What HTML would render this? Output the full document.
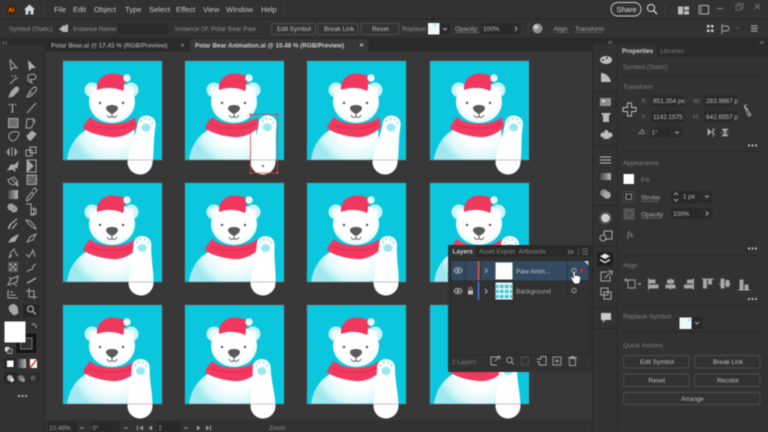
<!DOCTYPE html>
<html><head><meta charset="utf-8"><style>
html,body{margin:0;padding:0;width:768px;height:432px;overflow:hidden;background:#383838}
svg{display:block;filter:blur(.5px)}
text{font-family:"Liberation Sans",sans-serif;font-size:6.6px;fill:#a8a8a8}
.m{font-size:7.6px;fill:#c4c4c4}
.c{font-size:6.4px;fill:#8f8f8f}
.t{font-size:6.3px;font-weight:bold;fill:#9a9a9a}
.l{fill:#7f7f7f;font-size:6.6px}
.w{fill:#bdbdbd;font-size:6.4px}
.ic{fill:none;stroke:#a8a8a8;stroke-width:1}
.if{fill:#a8a8a8}
</style></head><body>
<svg width="768" height="432" viewBox="0 0 768 432" xmlns="http://www.w3.org/2000/svg">
<defs>
<radialGradient id="bd" gradientUnits="userSpaceOnUse" cx="50" cy="62" r="44"><stop offset=".5" stop-color="#fff"/><stop offset=".82" stop-color="#d8f7fa"/><stop offset="1" stop-color="#9fe8ef"/></radialGradient>
<radialGradient id="hd" gradientUnits="userSpaceOnUse" cx="49" cy="36" r="30"><stop offset=".68" stop-color="#fff"/><stop offset="1" stop-color="#c8f4f7"/></radialGradient>
<pattern id="pt" width="5" height="5" patternUnits="userSpaceOnUse"><rect width="5" height="5" fill="#d8f2f6"/><rect width="3.5" height="3" fill="#32c4d8"/></pattern>
<g id="bear">
<rect width="99" height="99" fill="#0ac7dd"/>
<path d="M4 99C6 84 14 73 27 67L71 67L73 99Z" fill="url(#bd)"/>
<circle cx="29" cy="29" r="7.5" fill="#c5f3f6"/><circle cx="29.5" cy="29.5" r="4.5" fill="#eafbfc"/>
<circle cx="68" cy="29" r="7.5" fill="#c5f3f6"/><circle cx="67.5" cy="29.5" r="4.5" fill="#eafbfc"/>
<ellipse cx="49" cy="41" rx="23" ry="21" fill="url(#hd)"/>
<path d="M34 29C33 18 42 12 50 12.500C56 13 61 14 64 17L61 23C61 26 61 28 60 30C52 26 42 26 34 29Z" fill="#f0385f"/>
<circle cx="64" cy="17" r="3.700" fill="#e6fafb"/>
<circle cx="37" cy="42" r="1.200" fill="#555"/><circle cx="60" cy="42" r="1.200" fill="#555"/>
<path d="M43 47C43 43 55 43 55 47C55 50 51 52 49 53C47 52 43 50 43 47Z" fill="#5a5a5c"/>
<path d="M49 52V55M44 54C45 57 48 57 49 55C50 57 53 57 54 54" fill="none" stroke="#555" stroke-width=".9"/>
<path d="M27 56C36 65 62 65 72 56L74 66C66 74 56 77 48 76C38 75 26 72 20 67C21 63 24 60 27 56Z" fill="#f23a60"/>
<path d="M26 63C38 69 60 69 71 62" fill="none" stroke="#e12f55" stroke-width="1.500"/>
</g>
<g id="paw">
<path d="M-12.500 0C-12.500-12-9-24-9-38C-9-50 9-50 9-38C9-24 12.500-12 12.500 0A12.500 12.500 0 0 1-12.500 0Z" fill="#fff"/>
<ellipse cx="0" cy="-35" rx="4.600" ry="4" fill="#9ae9f1"/>
<circle cx="-5.500" cy="-40.500" r="1.200" fill="#9ae9f1"/><circle cx="-2.100" cy="-43.500" r="1.200" fill="#9ae9f1"/><circle cx="2.100" cy="-43.500" r="1.200" fill="#9ae9f1"/><circle cx="5.500" cy="-40.500" r="1.200" fill="#9ae9f1"/>
</g>
<linearGradient id="gg"><stop offset="0" stop-color="#444"/><stop offset="1" stop-color="#bbb"/></linearGradient>
</defs>

<rect width="768" height="432" fill="#383838"/>

<!-- artboards -->
<use href="#bear" x="63" y="61"/><use href="#bear" x="185" y="61"/><use href="#bear" x="307" y="61"/><use href="#bear" x="430" y="61"/>
<use href="#bear" x="63" y="183"/><use href="#bear" x="185" y="183"/><use href="#bear" x="307" y="183"/><use href="#bear" x="430" y="183"/>
<use href="#bear" x="63" y="305"/><use href="#bear" x="185" y="305"/><use href="#bear" x="307" y="305"/><use href="#bear" x="430" y="305"/>
<use href="#paw" transform="translate(140 162) rotate(10)"/>
<use href="#paw" transform="translate(263 162) rotate(7)"/>
<use href="#paw" transform="translate(385 162) rotate(10)"/>
<use href="#paw" transform="translate(508 162) rotate(9)"/>
<use href="#paw" transform="translate(141 283) rotate(2)"/>
<use href="#paw" transform="translate(263 283) rotate(4)"/>
<use href="#paw" transform="translate(386 283) rotate(3)"/>
<use href="#paw" transform="translate(508 283) rotate(3)"/>
<use href="#paw" transform="translate(140 406) rotate(1)"/>
<use href="#paw" transform="translate(263 406) rotate(-2)"/>
<use href="#paw" transform="translate(386 406) rotate(0)"/>
<use href="#paw" transform="translate(508 406) rotate(0)"/>
<g fill="none" stroke="#777" stroke-opacity=".55" stroke-width=".8">
<rect x="63" y="61" width="99" height="99"/><rect x="185" y="61" width="99" height="99"/><rect x="307" y="61" width="99" height="99"/><rect x="430" y="61" width="99" height="99"/>
<rect x="63" y="183" width="99" height="99"/><rect x="185" y="183" width="99" height="99"/><rect x="307" y="183" width="99" height="99"/><rect x="430" y="183" width="99" height="99"/>
<rect x="63" y="305" width="99" height="99"/><rect x="185" y="305" width="99" height="99"/><rect x="307" y="305" width="99" height="99"/><rect x="430" y="305" width="99" height="99"/>
</g>
<!-- selection -->
<rect x="250.500" y="114.500" width="27" height="58.500" fill="none" stroke="#d8464e" stroke-width=".8"/>
<g fill="#d8464e"><rect x="249.500" y="113.500" width="2" height="2"/><rect x="276.500" y="113.500" width="2" height="2"/><rect x="249.500" y="172" width="2" height="2"/><rect x="276.500" y="172" width="2" height="2"/></g>
<circle cx="263" cy="166" r="1.200" fill="#777"/>

<!-- top menu -->
<rect width="768" height="39" fill="#323232"/>
<rect y="18.500" width="768" height=".8" fill="#262626"/>
<rect y="38" width="768" height="1" fill="#262626"/>
<rect x="7" y="5" width="9" height="9" rx="1" fill="#4e1d02"/>
<text x="8.300" y="12" style="font-size:6px;font-weight:bold;fill:#ff9a00">Ai</text>
<path d="M24 9.500L29.500 4.500L35 9.500H33.500V14.500H30.500V11H28.500V14.500H25.500V9.500Z" fill="#d6d6d6"/>
<rect x="44" y="4" width=".8" height="11" fill="#444"/>
<text class="m" x="54" y="12">File</text><text class="m" x="73" y="12">Edit</text><text class="m" x="94" y="12">Object</text><text class="m" x="125" y="12">Type</text><text class="m" x="149" y="12">Select</text><text class="m" x="176" y="12">Effect</text><text class="m" x="203" y="12">View</text><text class="m" x="226" y="12">Window</text><text class="m" x="261" y="12">Help</text>
<rect x="283" y="4" width=".8" height="11" fill="#444"/>
<rect x="611" y="2.500" width="30" height="13.500" rx="6.700" fill="none" stroke="#cfcfcf" stroke-width=".9"/>
<text class="m" x="616.500" y="12" style="fill:#dcdcdc">Share</text>
<circle cx="651" cy="8" r="3.600" fill="none" stroke="#d0d0d0" stroke-width="1.100"/><path d="M653.500 10.500L657 14" stroke="#d0d0d0" stroke-width="1.300"/>
<rect x="665" y="4" width=".8" height="11" fill="#444"/>
<path d="M678 6.500h5v8h-5zM684 6.500h5v3.500h-5zM684 11h5v3.500h-5z" fill="#bdbdbd"/>
<rect x="699" y="5.500" width="9.500" height="8.500" fill="none" stroke="#b5b5b5"/><rect x="699" y="5.500" width="3" height="8.500" fill="#666"/>
<rect x="717" y="8" width="6" height="1" fill="#8a8a8a"/>
<rect x="738" y="3.500" width="5" height="4.500" fill="none" stroke="#7a7a7a" stroke-width=".8"/><rect x="736" y="5.500" width="5" height="4.500" fill="#323232" stroke="#7a7a7a" stroke-width=".8"/>
<path d="M755 4l5 5M760 4l-5 5" stroke="#7a7a7a" stroke-width=".9"/>

<!-- control bar -->
<text class="c" x="9" y="31">Symbol (Static)</text>
<path d="M59 29l5-4 1 1 2-2 1 1v7h-5z" fill="#b9b9b9"/>
<text class="c" x="73" y="31">Instance Name:</text>
<rect x="118" y="23" width="50" height="11" fill="#2a2a2a"/>
<text class="c" x="175" y="31">Instance Of: Polar Bear Paw</text>
<g fill="none" stroke="#505050" stroke-width=".9"><rect x="271.500" y="23.500" width="44" height="11" rx="1.500"/><rect x="318" y="23.500" width="40" height="11" rx="1.500"/><rect x="361" y="23.500" width="38" height="11" rx="1.500"/></g>
<text class="w" x="277" y="31">Edit Symbol</text><text class="w" x="324" y="31">Break Link</text><text class="w" x="372" y="31">Reset</text>
<text class="c" x="402" y="31">Replace:</text>
<rect x="428" y="23" width="11.500" height="11.500" fill="#f2f7f8"/><rect x="434" y="24" width="2" height="2" fill="#7fe0ea"/>
<rect x="440" y="23" width="10" height="11.500" fill="#292929"/><path d="M443 28l2 2 2-2" class="ic" stroke-width=".8"/>
<text class="c" x="455" y="31" style="fill:#aaa">Opacity:</text><rect x="455" y="32.300" width="24" height=".5" fill="#888"/>
<rect x="481" y="23" width="30" height="11.500" fill="#292929"/><rect x="511" y="23" width="10" height="11.500" fill="#2b2b2b"/>
<text class="w" x="483" y="31">100%</text><path d="M515 26.500l2 2.300-2 2.300" class="ic" stroke-width=".8"/>
<rect x="528" y="23" width=".8" height="11" fill="#444"/>
<circle cx="537.500" cy="28.500" r="5" fill="#8d8d8d"/><circle cx="536" cy="27" r="2.500" fill="#c9c9c9"/>
<text class="c" x="553.500" y="31" style="fill:#a5a5a5">Align</text><rect x="553.500" y="32.300" width="15" height=".5" fill="#777"/>
<text class="c" x="575" y="31" style="fill:#a5a5a5">Transform</text><rect x="575" y="32.300" width="27" height=".5" fill="#777"/>
<path d="M707 25h2.500v2.500H707zM711 25h2.500v2.500H711zM707 29.500h2.500V32H707zM711 29.500h2.500V32H711z" fill="#cfcfcf"/>
<path d="M722 24v10M723 26h3.500a2 2 0 0 1 0 5H723" class="ic"/>
<path d="M736 27.500l1.500 1.500 1.500-1.500" stroke="#666" fill="none" stroke-width=".7"/>
<path d="M751 26h6.500M751 28.500h6.500M751 31h6.500" stroke="#a0a0a0" stroke-width="1.200"/>

<!-- tabs row -->
<rect x="44" y="39" width="549" height="12.500" fill="#2a2a2a"/>
<rect x="190" y="39" width="178" height="12.500" fill="#383838"/>
<text class="t" x="51" y="47.500">Polar Bear.ai @ 17.43 % (RGB/Preview)</text>
<path d="M181 43.500l3 3M184 43.500l-3 3" stroke="#8a8a8a" stroke-width=".8"/>
<text class="t" x="195" y="47.500" style="fill:#cfcfcf">Polar Bear Animation.ai @ 10.48 % (RGB/Preview)</text>
<path d="M360 43.500l3 3M363 43.500l-3 3" stroke="#cfcfcf" stroke-width=".8"/>

<!-- left toolbar -->
<rect y="39" width="44" height="393" fill="#323232"/>
<rect x="44" y="39" width="1" height="393" fill="#2a2a2a"/>
<rect y="39" width="44" height="6" fill="#2c2c2c"/>
<path d="M4 41.500l-1.500 1.500 1.500 1.500M7 41.500l-1.500 1.500 1.500 1.500" fill="none" stroke="#888" stroke-width=".6"/>
<g class="ic">
<path d="M10 60l7 8-4-.5-2 2.500z" fill="none"/>
<path d="M28 60l8 8-4 0-3 3z" fill="#b0b0b0" stroke="none"/>
<path d="M10 84l6-6M15 75l.5 2M18 78l-2 .5M12 75l.5 1.500"/>
<path d="M28 76c3-3 8-2 8 1s-5 3-6 2l2 4-4-2z"/>
<path d="M9 97l2-5 5-5c3 0 3 2 2 4l-5 5z" fill="#a8a8a8"/>
<path d="M27 97l2-5 5-5c3 0 3 2 2 4l-5 5z"/><path d="M29 95l3-3"/>
<text x="8.500" y="112.500" style="font-family:'Liberation Serif',serif;font-size:13px;fill:#b4b4b4;stroke:none">T</text>
<path d="M27 113l9-10"/>
<rect x="8.500" y="118.500" width="9.500" height="9" fill="#6f6f6f"/>
<path d="M27 119h7l-1 2 2 0-4 7h-5z"/>
<path d="M18 132c-3-1-8 0-9 3s2 6 4 6 6-4 6-9"/>
<path d="M27 136l5-5 4 3-5 6h-2z" fill="#a8a8a8"/>
<path d="M12 147v9M9 149l-2 3 2 3zM15 149l2 3-2 3z" fill="#888"/>
<rect x="26" y="150" width="6" height="6"/><rect x="30" y="147" width="6" height="6"/>
<path d="M8 170l3-5 4 0 3-3-1 6-3-1 1 4-3-2z" fill="#a8a8a8"/>
<path d="M27 160h9v12h-9z"/><path d="M27 160l6 6-6 6z" fill="#a8a8a8"/>
<path d="M8 180l6-3 4 5-4 3-4-1zM12 179l3 4"/><path d="M16 182l2 3-1 1z" fill="#ddd"/>
<rect x="27" y="175" width="9.500" height="9.500" fill="#5e5e5e"/>
<path d="M29 177h1M32 177h1M35 179h1M28 181h1M31 180h1M34 183h1" stroke-width="1.100"/>
</g>
<rect x="8" y="190" width="10" height="9" fill="url(#gg)"/>
<g class="ic">
<path d="M27 198l5-6 2 2-5 6-2.500 1z M32 190l3-2 2 2-2 3"/>
<circle cx="11" cy="207" r="3" fill="#999"/><circle cx="14" cy="209" r="3" fill="#999"/>
<path d="M26 204h5v11h3v-8"/><rect x="31" y="209" width="5" height="5"/>
<path d="M8 228l4-5 5-4M12 229l5-6M10 224l-1 5" stroke-width="1.300"/>
<path d="M26 220l4 1 4 4 2 4-4-2-4-4z"/>
<path d="M9 242l3-4 6-3-3 6z" fill="#a8a8a8"/><path d="M27 242l3-5 6-3-3 6z"/>
<path d="M12 255l-3 3 2-6 3-3 2 5 2 2M26 254l3 3 4-7 2 7"/>
</g>
<rect x="8" y="262" width="10" height="10" fill="#5c5c5c"/>
<g fill="#c8c8c8"><circle cx="10.500" cy="264.500" r=".9"/><circle cx="15.500" cy="264.500" r=".9"/><circle cx="13" cy="267" r=".9"/><circle cx="10.500" cy="269.500" r=".9"/><circle cx="15.500" cy="269.500" r=".9"/></g>
<g class="ic">
<path d="M27 272c3-4 6-1 6-4s-2 0 3-4"/>
<path d="M8 285l3-6 7-3-1 6zM9 277l2 3M14 284l3 2"/>
<path d="M27 283l4-2 5-3" stroke-width="1.500"/>
<path d="M8 290v8h10M10 292h3M10 295h6"/>
<path d="M29 288v9h8M26 291h8v8"/>
<path d="M10 306c2-2 5-2 7 1l1 6-4 2-4-4-1-3z" fill="#a8a8a8"/>
</g>
<rect x="23" y="304" width="16" height="13" rx="1" fill="#272727"/>
<circle cx="30.500" cy="309" r="3" fill="none" stroke="#c4c4c4"/><path d="M33 311.500l3 3" stroke="#c4c4c4" stroke-width="1.100"/>
<!-- fill/stroke -->
<rect x="15.500" y="333" width="21.500" height="20.500" fill="#161616" stroke="#444" stroke-width=".7"/>
<rect x="20.500" y="338" width="11.500" height="11" fill="#323232" stroke="#999" stroke-width=".7"/>
<rect x="4.500" y="321.500" width="21" height="21" fill="#fff"/>
<path d="M32 325c2-2 4-1 4 3" class="ic"/>
<rect x="5" y="347" width="4.500" height="4.500" fill="#ddd"/><rect x="7.500" y="349" width="4.500" height="4.500" fill="#444" stroke="#ccc" stroke-width=".6"/>
<rect x="4" y="358" width="12" height="11" rx="1" fill="#272727"/><rect x="7" y="360.500" width="6.500" height="6.500" fill="#fff"/>
<rect x="18" y="359" width="8" height="9" fill="url(#gg)"/>
<rect x="30" y="359" width="7" height="9" fill="#fff"/><path d="M30 368l7-9" stroke="#e01414" stroke-width="1.300"/>
<rect x="4" y="372" width="36" height="11.500" rx="1" fill="#2e2e2e"/><rect x="4" y="372" width="12" height="11.500" rx="1" fill="#262626"/>
<circle cx="10" cy="378" r="3" fill="#aaa"/><circle cx="12" cy="380" r="2" fill="#ddd"/>
<circle cx="21" cy="378" r="3" fill="#777"/><circle cx="23" cy="380" r="2" fill="#999"/>
<circle cx="33" cy="378" r="2.600" fill="#555"/>
<g fill="#aaa"><rect x="18" y="395" width="2" height="2"/><rect x="21.500" y="395" width="2" height="2"/><rect x="25" y="395" width="2" height="2"/></g>

<!-- status bar -->
<rect x="45" y="420" width="548" height="12" fill="#323232"/>
<rect x="48" y="421" width="29" height="11" fill="#292929"/><rect x="91" y="421" width="29" height="11" fill="#292929"/><rect x="157" y="421" width="24" height="11" fill="#292929"/>
<text class="c" x="49" y="430" style="fill:#a0a0a0">10.48%</text><text class="c" x="92.500" y="430" style="fill:#a0a0a0">0°</text><text class="c" x="158.500" y="430" style="fill:#a0a0a0">2</text>
<text class="c" x="269" y="430">Zoom</text>
<g fill="none" stroke="#9a9a9a" stroke-width=".8"><path d="M80 427l2 2 2-2M124 427l2 2 2-2M184 427l2 2 2-2"/></g>
<g fill="#a0a0a0"><path d="M137 425.500h1v5h-1zM143 425.500v5l-3.500-2.500zM152 425.500v5l-3.500-2.500zM197 425.500v5l3.500-2.500zM206 425.500v5l3.500-2.500zM210 425.500h1v5h-1z"/></g>

<!-- right icon strip -->
<rect x="593" y="39" width="175" height="393" fill="#323232"/>
<rect x="592" y="39" width="1" height="393" fill="#262626"/>
<rect x="593" y="39" width="175" height="5" fill="#2a2a2a"/>
<rect x="617" y="44" width="1" height="388" fill="#292929"/>
<path d="M612 41l-1.500 1.500 1.500 1.500M610 41l-1.500 1.500 1.500 1.500M760 41l1.500 1.500-1.500 1.500M762 41l1.500 1.500-1.500 1.500" fill="none" stroke="#888" stroke-width=".6"/>
<g fill="#242424"><rect x="593" y="92" width="24" height=".8"/><rect x="593" y="145" width="24" height=".8"/><rect x="593" y="205" width="24" height=".8"/><rect x="593" y="246" width="24" height=".8"/><rect x="593" y="307" width="24" height=".8"/><rect x="593" y="328" width="24" height=".8"/></g>
<ellipse cx="606" cy="60" rx="6" ry="4" fill="#bdbdbd"/><circle cx="603" cy="60" r="1" fill="#333"/><circle cx="607" cy="58" r="1" fill="#333"/>
<path d="M601 82V73c5 0 9 4 10 9z" fill="#bbb"/>
<rect x="600" y="98" width="11" height="8" fill="#8f8f8f"/><rect x="602" y="100" width="3" height="2" fill="#ddd"/>
<path d="M601 113h10l-2 3v6h-6v-6z" fill="#b9b9b9"/>
<path d="M606 130a2.500 2.500 0 0 1 2.500 3 2.500 2.500 0 1 1 0 4l1 2h-6l1-2a2.500 2.500 0 1 1 0-4 2.500 2.500 0 0 1 1.500-3z" fill="#bdbdbd"/>
<path d="M600 157h11M600 160h11M600 163h11" stroke="#c0c0c0" stroke-width="1.100"/>
<rect x="600" y="173" width="11" height="7" fill="url(#gg)"/>
<circle cx="604" cy="193" r="3.800" fill="#888"/><circle cx="607" cy="195" r="3.800" fill="#aaa"/>
<circle cx="605.500" cy="218" r="4.500" fill="#d0d0d0"/><circle cx="605.500" cy="218" r="5.800" fill="none" stroke="#888" stroke-dasharray="1 1"/>
<rect x="604" y="231" width="8" height="8" fill="none" stroke="#aaa"/><circle cx="603" cy="238" r="3" fill="#323232" stroke="#aaa"/>
<rect x="597" y="252" width="16" height="14" fill="#202020"/>
<path d="M605 253.500l5 2.700-5 2.800-5-2.800z" fill="#e6e6e6"/><path d="M600 259l5 2.800 5-2.800v1.500l-5 2.800-5-2.800z" fill="#e6e6e6"/>
<path d="M607 272h-6v9h9v-5M605 278l6-6M608 271h4v4" class="ic" stroke="#c4c4c4"/>
<rect x="601" y="288" width="7" height="7" class="ic"/><rect x="604" y="292" width="7" height="7" class="ic"/>
<path d="M601 313h10v7h-6l-2 3v-3h-2z" fill="#c9c9c9"/>

<!-- properties -->
<rect x="618" y="44" width="150" height="13" fill="#2a2a2a"/>
<rect x="618" y="44" width="38" height="13" fill="#323232"/>
<text class="t" x="622" y="53" style="fill:#d2d2d2">Properties</text><text class="t" x="660" y="53" style="fill:#7e7e7e;font-weight:normal">Libraries</text>
<g fill="#292929"><rect x="622" y="76" width="138" height=".8"/><rect x="622" y="151" width="138" height=".8"/><rect x="622" y="255" width="138" height=".8"/><rect x="622" y="305" width="138" height=".8"/><rect x="622" y="331" width="138" height=".8"/></g>
<text class="l" x="623" y="69">Symbol (Static)</text>
<text class="l" x="623" y="89">Transform</text>
<path d="M627.500 103h4v4.500h4.500v4h-4.500v4.500h-4v-4.500h-4.500v-4h4.500z" fill="none" stroke="#c4c4c4" stroke-width=".9"/>
<text class="l" x="641" y="103">X:</text><text class="l" x="693" y="103">W:</text><text class="l" x="641" y="119">Y:</text><text class="l" x="693" y="119">H:</text>
<g fill="#2a2a2a"><rect x="651" y="95" width="33" height="11.500"/><rect x="704" y="95" width="33" height="11.500"/><rect x="651" y="111" width="33" height="11.500"/><rect x="704" y="111" width="33" height="11.500"/><rect x="650" y="127" width="21" height="10.500"/><rect x="672" y="127" width="10" height="10.500"/></g>
<text x="653" y="103" class="w">851.354 px</text><text x="706" y="103" class="w">283.9867 p</text><text x="653" y="119" class="w">1142.1575</text><text x="706" y="119" class="w">642.6557 p</text><text x="651.500" y="134.500" class="w">1°</text>
<path d="M639 133.500l3.500-4 2 4z" fill="none" stroke="#999" stroke-width=".8"/><text class="l" x="646" y="134">:</text>
<path d="M675 131.500l2 2 2-2" class="ic" stroke-width=".8"/>
<path d="M747 105c-2 0-3 1-2 3l3 7c1 2 3 1 2 0l-3-7M744 105l7 10" fill="none" stroke="#aaa" stroke-width=".9"/>
<path d="M708 129l3 3-3 3zM715 129l-3 3 3 3M713 128v9" fill="none" stroke="#aaa" stroke-width=".8"/><path d="M708 129l3 3-3 3z" fill="#aaa"/>
<path d="M722 129h6l-3 3zM722 136h6l-3-3zM721 132.500h8" fill="#aaa" stroke="#aaa" stroke-width=".6"/>
<g fill="#b5b5b5"><rect x="748" y="144.500" width="2" height="2"/><rect x="751.500" y="144.500" width="2" height="2"/><rect x="755" y="144.500" width="2" height="2"/><rect x="748" y="247.500" width="2" height="2"/><rect x="751.500" y="247.500" width="2" height="2"/><rect x="755" y="247.500" width="2" height="2"/><rect x="748" y="298" width="2" height="2"/><rect x="751.500" y="298" width="2" height="2"/><rect x="755" y="298" width="2" height="2"/></g>
<text class="l" x="623" y="165">Appearance</text>
<rect x="623.500" y="174" width="10.500" height="10" fill="#fff"/>
<text class="l" x="641" y="182">Fill</text>
<rect x="623.500" y="191.500" width="10.500" height="10.500" fill="#282828" stroke="#555" stroke-width=".7"/><rect x="626" y="194" width="5.500" height="5.500" fill="none" stroke="#aaa" stroke-width=".8"/>
<text class="l" x="641" y="199.500" style="fill:#aaa">Stroke</text><rect x="641" y="201" width="18" height=".5" fill="#888"/>
<rect x="671" y="191" width="31" height="12" fill="#292929"/><rect x="702.500" y="191" width="10" height="12" fill="#2b2b2b"/>
<path d="M674 195l2-2 2 2M674 199l2 2 2-2" class="ic" stroke-width=".8"/><text class="w" x="683" y="198.500">1 px</text><path d="M705 195.500l2 2 2-2" class="ic" stroke-width=".8"/>
<rect x="624" y="209" width="10" height="10" fill="#4a4a4a" stroke="#666" stroke-width=".7"/><circle cx="629" cy="214" r="3.500" fill="none" stroke="#888" stroke-dasharray="1 1" stroke-width=".8"/>
<text class="l" x="641" y="216.500" style="fill:#aaa">Opacity</text><rect x="641" y="218" width="20" height=".5" fill="#888"/>
<rect x="671" y="208" width="30" height="11" fill="#292929"/><rect x="702" y="208" width="10" height="11" fill="#2b2b2b"/>
<text class="w" x="673" y="216">100%</text><path d="M706 211.500l2 2-2 2" class="ic" stroke-width=".8"/>
<text x="627" y="237" style="font-family:'Liberation Serif',serif;font-style:italic;font-size:8px;fill:#a8a8a8">fx.</text>
<text class="l" x="623" y="267.500">Align</text>
<g fill="none" stroke="#a8a8a8" stroke-width=".9">
<path d="M628 280h7v8h-7zM626 278v4M624 280h4"/><path d="M638 283l1.500 1.500 1.500-1.500"/>
<path d="M648.500 278v12"/><rect x="649" y="280" width="6" height="3" fill="#a8a8a8"/><rect x="649" y="285" width="9" height="3" fill="#a8a8a8"/>
<path d="M670.500 278v12"/><rect x="667.500" y="280" width="6" height="3" fill="#a8a8a8"/><rect x="666" y="285" width="9" height="3" fill="#a8a8a8"/>
<path d="M693.500 278v12"/><rect x="687.500" y="280" width="6" height="3" fill="#a8a8a8"/><rect x="684.500" y="285" width="9" height="3" fill="#a8a8a8"/>
<path d="M702 279h12"/><rect x="703.500" y="279" width="3" height="9" fill="#a8a8a8"/><rect x="708.500" y="279" width="3" height="5" fill="#a8a8a8"/>
<path d="M719 284h12"/><rect x="721" y="279" width="3" height="9" fill="#a8a8a8"/><rect x="726" y="280.500" width="3" height="6" fill="#a8a8a8"/>
<path d="M738 290h12"/><rect x="740" y="280" width="3" height="10" fill="#a8a8a8"/><rect x="745" y="285" width="3" height="5" fill="#a8a8a8"/>
</g>
<text class="l" x="623" y="318.500">Replace Symbol:</text>
<rect x="679.500" y="317.500" width="12" height="11.500" fill="#f2f7f8"/><rect x="688" y="319" width="2" height="2" fill="#7fe0ea"/>
<rect x="692" y="317" width="10.500" height="12" fill="#292929"/><path d="M695 322l2 2 2-2" class="ic" stroke-width=".8"/>
<text class="l" x="623" y="347.500">Quick Actions</text>
<g fill="none" stroke="#4e4e4e" stroke-width=".9"><rect x="623.500" y="355.500" width="65.500" height="12.500" rx="1.500"/><rect x="694.500" y="355.500" width="65.500" height="12.500" rx="1.500"/><rect x="623.500" y="374" width="65.500" height="12.500" rx="1.500"/><rect x="694.500" y="374" width="65.500" height="12.500" rx="1.500"/><rect x="623.500" y="392.500" width="136.500" height="12" rx="1.500"/></g>
<text class="w" x="640" y="364">Edit Symbol</text><text class="w" x="713" y="364">Break Link</text><text class="w" x="648.500" y="382.500">Reset</text><text class="w" x="717" y="382.500">Recolor</text><text class="w" x="681" y="401">Arrange</text>

<!-- layers panel -->
<rect x="448" y="245" width="144" height="127" fill="#323232"/>
<rect x="448" y="245" width="144" height="12" fill="#2a2a2a"/>
<rect x="448" y="245" width="28" height="12" fill="#323232"/>
<text class="t" x="452.500" y="253.500" style="fill:#d0d0d0">Layers</text>
<text class="t" x="479" y="253.500" style="font-weight:normal;fill:#8b8b8b">Asset Export</text><text class="t" x="518.500" y="253.500" style="font-weight:normal;fill:#8b8b8b">Artboards</text>
<path d="M568 250l2 2-2 2M571 250l2 2-2 2" fill="none" stroke="#aaa" stroke-width=".7"/><rect x="578" y="248" width=".7" height="7" fill="#666"/>
<path d="M582 249h6M582 251.500h6M582 254h6" stroke="#888" stroke-width=".8"/>
<rect x="451" y="260" width="138" height="95" fill="#323232" stroke="#2a2a2a"/>
<rect x="451.500" y="261" width="137" height="19.500" fill="#344a60"/>
<rect x="451.500" y="280.500" width="137" height=".7" fill="#2a2a2a"/><rect x="451.500" y="300.500" width="137" height=".7" fill="#2a2a2a"/>
<rect x="465" y="261" width=".7" height="40" fill="#2a2a2a"/><rect x="480.500" y="261" width=".7" height="40" fill="#2a2a2a"/><rect x="567" y="261" width=".7" height="40" fill="#2a2a2a"/>
<rect x="477.500" y="261" width="2" height="19" fill="#cc4b4b"/><rect x="477.500" y="281.500" width="2" height="18.500" fill="#3f68c8"/>
<g fill="none" stroke="#bdbdbd" stroke-width=".9"><path d="M454 270.500c2-3.500 6-3.500 8 0-2 3.500-6 3.500-8 0zM454 291c2-3.500 6-3.500 8 0-2 3.500-6 3.500-8 0z"/><path d="M485 268.500l2.200 2.200-2.200 2.200M485 289l2.200 2.200-2.200 2.200"/></g>
<circle cx="458" cy="270.500" r="1.300" fill="#bdbdbd"/><circle cx="458" cy="291" r="1.300" fill="#bdbdbd"/>
<rect x="468" y="290.500" width="5" height="4" fill="#bdbdbd"/><path d="M469 290.500v-1.500a1.500 1.500 0 0 1 3 0v1.500" fill="none" stroke="#bdbdbd" stroke-width=".7"/>
<rect x="495.500" y="262.500" width="17" height="17" fill="#fff"/>
<rect x="495.500" y="282.500" width="17" height="17" fill="#fff"/><rect x="496" y="283" width="16" height="16" fill="url(#pt)"/>
<text x="516" y="273.500" style="font-size:6.500px;fill:#bfc7cf">Paw Anim...</text>
<text x="516" y="293.500" style="font-size:6.500px;fill:#aaa">Background</text>
<circle cx="574" cy="270.500" r="2.200" fill="none" stroke="#c4c4c4" stroke-width=".8"/><circle cx="574" cy="290.500" r="2.200" fill="none" stroke="#aaa" stroke-width=".8"/>
<circle cx="581.500" cy="270.500" r="1.600" fill="#e01e2a"/><path d="M584 261h4.500v4.500z" fill="#ccc"/>
<path d="M573 272.500c0-1.500 2-1.500 2 0v3.500l1-.5c1 0 1.500 0 2 .5l1.500.3c1 .3 1 1 1 2l-.5 3c-.3 1.700-1 2.500-2.500 2.500h-2c-1 0-2-1-2.500-2l-2-3.500c-.5-1 .7-1.700 1.500-.8l1 1z" fill="#fff" stroke="#222" stroke-width=".5"/>
<text x="452" y="364" style="font-size:6.300px;fill:#7c7c7c">2 Layers</text>
<g fill="none" stroke="#a5a5a5" stroke-width=".9">
<path d="M499 357h-8v8h6"/><path d="M495 361l4-4M497 356.500h3v3"/>
<circle cx="509.500" cy="360" r="2.700"/><path d="M511.500 362l2.500 2.500"/>
<rect x="521.500" y="357" width="7" height="8" stroke="#555"/>
<path d="M537 359h4v-2.500l5 0v8.500h-7v-3M537 362h3"/>
<rect x="553" y="357" width="8" height="8"/><path d="M557 359v4M555 361h4"/>
<rect x="569.500" y="358.500" width="6" height="7"/><path d="M568 357.500h9M571 356.500h3"/>
</g>
</svg>
</body></html>
